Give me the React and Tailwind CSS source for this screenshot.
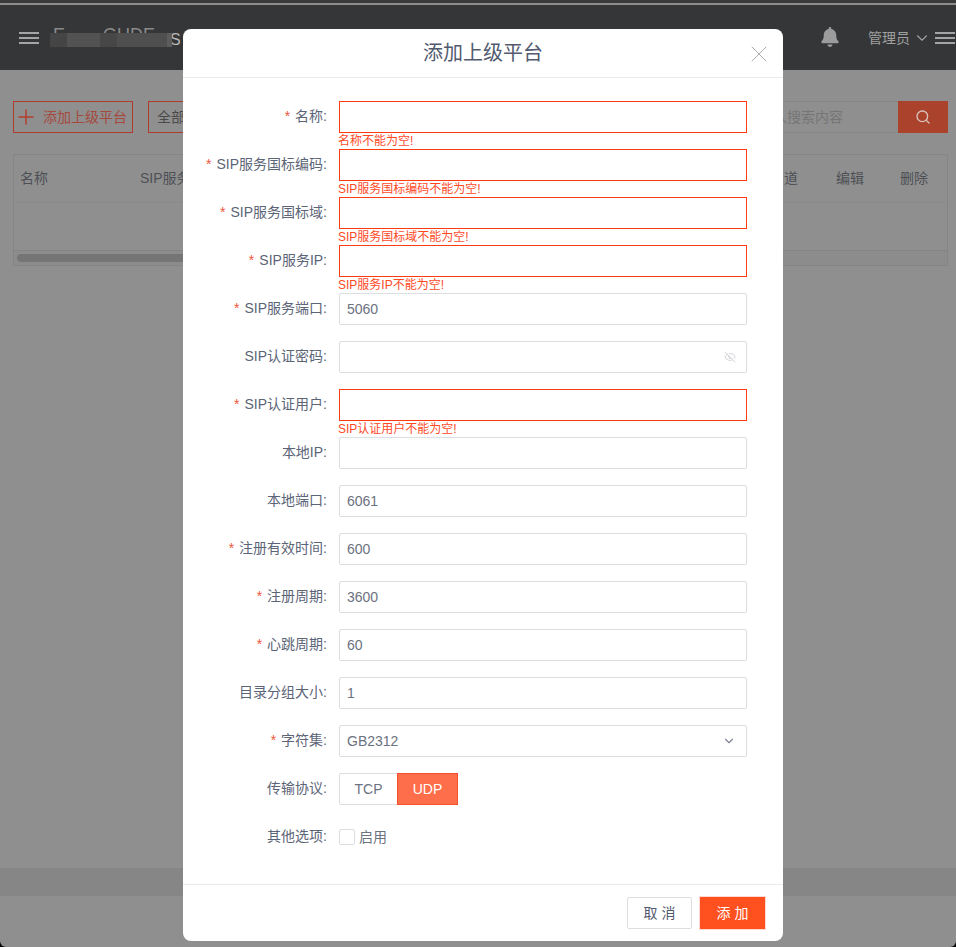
import { ChevronDown, EyeOff, Plus, Search, X } from "lucide-react";
import { FaBell } from "react-icons/fa";

const fontStack = "font-['Liberation_Sans','Noto_Sans_CJK_SC',sans-serif]";

const fields = [
  { label: "名称", required: true, error: "名称不能为空!" },
  { label: "SIP服务国标编码", required: true, error: "SIP服务国标编码不能为空!" },
  { label: "SIP服务国标域", required: true, error: "SIP服务国标域不能为空!" },
  { label: "SIP服务IP", required: true, error: "SIP服务IP不能为空!" },
  { label: "SIP服务端口", required: true, value: "5060" },
  { label: "SIP认证密码", password: true },
  { label: "SIP认证用户", required: true, error: "SIP认证用户不能为空!" },
  { label: "本地IP" },
  { label: "本地端口", value: "6061" },
  { label: "注册有效时间", required: true, value: "600" },
  { label: "注册周期", required: true, value: "3600" },
  { label: "心跳周期", required: true, value: "60" },
  { label: "目录分组大小", value: "1" },
];

const Burger = ({ className }) => (
  <div className={`flex w-5 flex-col gap-[3px] ${className}`}>
    <div className="h-[2px] bg-[#a5a5a5]" />
    <div className="h-[2px] bg-[#a5a5a5]" />
    <div className="h-[2px] bg-[#a5a5a5]" />
  </div>
);

const Row = ({ label, required, children }) => (
  <div className="flex h-12">
    <div className="flex h-8 w-[144px] items-center justify-end pb-[2px] text-sm text-[#5c6477]">
      {required && <span className="mr-[5px] text-sm text-[#f0553a]">*</span>}
      <span>{label}:</span>
    </div>
    <div className="ml-[12px] w-[408px]">{children}</div>
  </div>
);

const Field = ({ label, required, error, value, password }) => (
  <Row label={label} required={required}>
    <div
      className={`flex h-8 items-center justify-between border pr-2 pl-[7px] text-sm text-[#6b7280] ${
        error ? "border-[#ff3b14]" : "rounded-[2px] border-[#dcdee2]"
      }`}
    >
      <span>{value}</span>
      {password && <EyeOff size={12} className="mr-[2px] text-[#d4d6da]" />}
    </div>
    {error && (
      <div className="-ml-px h-4 text-xs leading-[16px] whitespace-nowrap text-[#ff4a1f]">
        {error}
      </div>
    )}
  </Row>
);

export default function App() {
  return (
    <div className={`relative h-[947px] w-[956px] overflow-hidden bg-black ${fontStack}`}>
      <div className="flex h-full flex-col overflow-hidden rounded-b-[6px] bg-[#8f8f8f]">
        {/* top strip */}
        <div className="h-[3px] bg-[#3a3a3a]" />
        <div className="h-[2px] bg-[#8c8c8c]" />

        {/* header */}
        <header className="relative flex h-[65px] items-center bg-[#353638] pr-px pl-[19px]">
          <Burger />
          <div className="ml-[14px] flex text-lg leading-6 text-[#8a8a8a]">
            <span>E</span>
            <span className="ml-[38px]">GUDE</span>
            <span className="mt-[5px] ml-[15px] text-base text-[#b8b8b8]">S</span>
          </div>
          {/* blurred out logo */}
          <div className="absolute top-[28px] left-[50px] flex h-[14px] w-[122px]">
            <div className="w-[17px] bg-[#454545]" />
            <div className="w-[33px] bg-[#525252]" />
            <div className="w-[17px] bg-[#474747]" />
            <div className="w-[50px] bg-[#4f4f4f]" />
            <div className="w-[5px] bg-[#5c5c5c]" />
          </div>
          <div className="ml-auto flex items-center">
            <FaBell size={20} className="-mt-[2px] text-[#9c9c9c]" />
            <span className="ml-[28px] text-sm text-[#a0a0a0]">管理员</span>
            <ChevronDown size={18} strokeWidth={1.5} className="ml-[3px] text-[#a0a0a0]" />
            <Burger className="ml-1" />
          </div>
        </header>

        {/* page behind the dialog */}
        <main className="flex-1 pt-[31px] pr-2 pl-[13px]">
          <div className="flex h-8 items-stretch">
            <div className="flex w-[120px] items-center gap-[5px] border border-[#ae3b2c] pb-px text-sm text-[#a5493c]">
              <Plus size={24} strokeWidth={1.5} className="text-[#b33e2e]" />
              <span>添加上级平台</span>
            </div>
            <div className="ml-[15px] flex w-[100px] items-center border border-[#ae3b2c] pl-2 text-sm text-[#4a4a4a]">
              全部
            </div>
            <div className="ml-auto flex">
              <div className="flex w-[140px] items-center justify-end border-y border-[#858585] pr-[55px] text-sm text-[#757575]">
                入搜索内容
              </div>
              <div className="flex w-[50px] items-center justify-center bg-[#ab422c] pb-px">
                <Search size={16} className="text-[#d9c4be]" />
              </div>
            </div>
          </div>

          <div className="mt-[21px] h-[112px] w-[935px] border border-[#858585]">
            <div className="flex h-12 items-center border-b border-[#8a8a8a] pb-[2px] text-sm text-[#4d4f55]">
              <span className="ml-[6px]">名称</span>
              <span className="ml-[92px]">SIP服务</span>
              <span className="ml-auto">道</span>
              <span className="ml-[38px]">编辑</span>
              <span className="mr-[12px] ml-[36px] w-[35px]">删除</span>
            </div>
            <div className="h-12 border-b border-[#858585]" />
            <div className="flex h-[14px] items-center bg-[#8c8c8c] px-[3px]">
              <div className="h-2 w-[600px] rounded bg-[#757575]" />
            </div>
          </div>
        </main>

        {/* footer band */}
        <div className="mb-[51px] h-7 bg-[#868686]" />
      </div>

      {/* dialog */}
      <div className="absolute top-[29px] left-[183px] flex h-[912px] w-[600px] flex-col rounded-lg bg-white">
        <div className="relative flex h-[49px] shrink-0 items-center justify-center border-b border-[#e8eaec] text-xl text-[#515a6e]">
          添加上级平台
          <X size={28} strokeWidth={0.7} className="absolute top-[11px] right-[10px] text-[#9a9a9a]" />
        </div>

        <div className="flex-1 pt-[23px]">
          {fields.map((field) => (
            <Field key={field.label} {...field} />
          ))}

          <Row label="字符集" required>
            <div className="flex h-8 items-center justify-between rounded-[2px] border border-[#dcdee2] pr-[10px] pl-[7px] text-sm text-[#6b7280]">
              <span>GB2312</span>
              <ChevronDown size={14} className="text-[#808695]" />
            </div>
          </Row>

          <Row label="传输协议">
            <div className="flex h-8 text-sm">
              <div className="flex w-[58px] items-center justify-center rounded-l-[2px] border border-r-0 border-[#dcdee2] text-[#6b7280]">
                TCP
              </div>
              <div className="flex w-[61px] items-center justify-center border border-[#f4512c] bg-[#ff6e4a] text-white">
                UDP
              </div>
            </div>
          </Row>

          <Row label="其他选项">
            <div className="flex h-8 items-center text-sm text-[#6b7280]">
              <div className="h-4 w-4 rounded-[2px] border border-[#dcdee2]" />
              <span className="ml-[4px]">启用</span>
            </div>
          </Row>
        </div>

        <div className="flex h-[57px] shrink-0 items-start justify-end border-t border-[#e8eaec] pt-3 pr-[18px]">
          <div className="flex h-8 w-[65px] items-center justify-center rounded-[2px] border border-[#dcdee2] text-sm text-[#515a6e]">
            取 消
          </div>
          <div className="ml-[8px] flex h-8 w-[65px] items-center justify-center bg-[#ff5020] text-sm text-white ring-1 ring-[#ffd9cf]">
            添 加
          </div>
        </div>
      </div>
    </div>
  );
}
